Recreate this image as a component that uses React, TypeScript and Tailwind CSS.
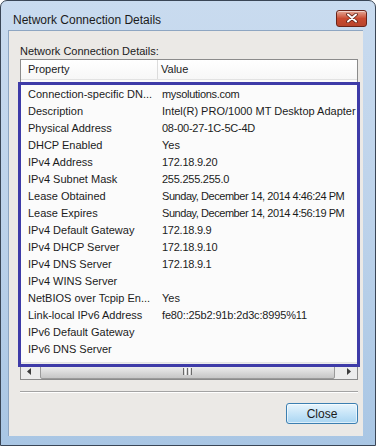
import React from 'react';

// [property, value, value tracking class]
const rows: [string, string, string][] = [
  ['Connection-specific DN...', 'mysolutions.com', 'tracking-[-0.3px]'],
  ['Description', 'Intel(R) PRO/1000 MT Desktop Adapter', 'tracking-normal'],
  ['Physical Address', '08-00-27-1C-5C-4D', 'tracking-[-0.25px]'],
  ['DHCP Enabled', 'Yes', 'tracking-normal'],
  ['IPv4 Address', '172.18.9.20', 'tracking-[-0.25px]'],
  ['IPv4 Subnet Mask', '255.255.255.0', 'tracking-[-0.25px]'],
  ['Lease Obtained', 'Sunday, December 14, 2014 4:46:24 PM', 'tracking-[-0.45px]'],
  ['Lease Expires', 'Sunday, December 14, 2014 4:56:19 PM', 'tracking-[-0.45px]'],
  ['IPv4 Default Gateway', '172.18.9.9', 'tracking-[-0.25px]'],
  ['IPv4 DHCP Server', '172.18.9.10', 'tracking-[-0.25px]'],
  ['IPv4 DNS Server', '172.18.9.1', 'tracking-[-0.25px]'],
  ['IPv4 WINS Server', '', ''],
  ['NetBIOS over Tcpip En...', 'Yes', 'tracking-normal'],
  ['Link-local IPv6 Address', 'fe80::25b2:91b:2d3c:8995%11', 'tracking-[-0.15px]'],
  ['IPv6 Default Gateway', '', ''],
  ['IPv6 DNS Server', '', ''],
];

export default function App() {
  return (
    <div className="w-[379px] h-[447px] bg-white font-['Liberation_Sans',sans-serif] text-[#1b1b1b]">
      {/* window frame */}
      <div className="w-[376px] h-[446px] rounded-t-[7px] border border-[#3a4656] bg-gradient-to-b from-[#c9dbef] via-[#bcd2ea] to-[#a9c6e4] flex flex-col overflow-hidden">
        {/* title bar */}
        <div className="h-[29px] flex items-center justify-between pl-[12px] pr-[8px]">
          <span className="text-[12px] leading-none mt-[9px]">Network Connection Details</span>
          <button className="w-[31px] h-[17px] mt-[5px] rounded-[3px] border border-[#6b2318] bg-gradient-to-b from-[#e3a796] via-[#c94a30] to-[#b8442c] flex items-center justify-center shadow-[inset_0_1px_0_rgba(255,255,255,0.5)]">
            <svg width="12" height="10" viewBox="0 0 12 10">
              <path d="M2 1.5 L10 8.5 M10 1.5 L2 8.5" stroke="#5a2016" strokeWidth="3.6" strokeLinecap="round" />
              <path d="M2 1.5 L10 8.5 M10 1.5 L2 8.5" stroke="#ffffff" strokeWidth="2" strokeLinecap="round" />
            </svg>
          </button>
        </div>

        {/* client area */}
        <div className="flex-1 flex pl-[7px] pr-[11px] pb-[9px]">
          <div className="w-[355px] min-w-0 bg-[#ebe9e6] border-l border-t border-[#8ea6c2] flex flex-col pl-[11px] pr-[5px]">
            <div className="mt-[13px] h-[14px] text-[11px] leading-[14px]">Network Connection Details:</div>

            {/* list view */}
            <div className="relative mt-[1px] w-[338px] h-[321px] border border-[#8b8b8b] bg-[#fbfbfb] flex flex-col text-[11px]">
              <div className="h-[20px] flex border-b border-[#e2e2e2] bg-gradient-to-b from-white to-[#f7f7f7]">
                <div className="w-[137px] pl-[7px] flex items-center border-r border-[#dcdcdc]">Property</div>
                <div className="flex-1 pl-[3px] flex items-center">Value</div>
              </div>

              <div className="pt-[6px] flex flex-col overflow-hidden">
                {rows.map(([k, v, t]) => (
                  <div key={k} className="h-[17px] flex items-center leading-none">
                    <div className="w-[141px] shrink-0 pl-[7px] whitespace-nowrap overflow-hidden">{k}</div>
                    <div className={`flex-1 min-w-0 whitespace-nowrap ${t}`}>{v}</div>
                  </div>
                ))}
              </div>

              <div className="flex-1" />

              {/* horizontal scrollbar */}
              <div className="h-[17px] flex items-center bg-[#ececec] border-t border-[#e4e4e4]">
                <div className="w-[17px] h-full flex items-center justify-center">
                  <svg width="5" height="7" viewBox="0 0 5 7"><path d="M4 0 L0 3.5 L4 7 Z" fill="#3c3c3c" /></svg>
                </div>
                <div className="ml-[2px] w-[295px] h-[15px] rounded-[2px] border border-[#9a9a9a] bg-gradient-to-b from-[#f2f2f2] via-[#dcdcdc] to-[#c6c6c6] flex items-center justify-center">
                  <div className="flex gap-[1px]">
                    <div className="w-[1px] h-[7px] bg-[#6a6a6a]" />
                    <div className="w-[1px] h-[7px] bg-[#f8f8f8]" />
                    <div className="w-[1px] h-[7px] bg-[#6a6a6a]" />
                    <div className="w-[1px] h-[7px] bg-[#f8f8f8]" />
                    <div className="w-[1px] h-[7px] bg-[#6a6a6a]" />
                  </div>
                </div>
                <div className="flex-1" />
                <div className="w-[17px] h-full flex items-center justify-center">
                  <svg width="5" height="7" viewBox="0 0 5 7"><path d="M1 0 L5 3.5 L1 7 Z" fill="#3c3c3c" /></svg>
                </div>
              </div>

              {/* highlight annotation */}
              <div className="absolute left-[-3px] top-[22px] w-[342px] h-[285px] border-[3px] border-[#3e3ba8] pointer-events-none" />
            </div>

            {/* separator */}
            <div className="mt-[11px] w-[338px] h-[2px] border-t border-[#a3a3a3] border-b border-b-white" />

            <div className="w-[338px] flex justify-end mt-[10px]">
              <button className="w-[72px] h-[21px] rounded-[3px] border border-[#3c7fb1] bg-gradient-to-b from-[#e8f5fd] via-[#c7e5f8] to-[#a9d5f2] text-[12px] leading-none shadow-[inset_0_0_0_1px_rgba(255,255,255,0.6)]">
                Close
              </button>
            </div>
          </div>
        </div>
      </div>
    </div>
  );
}
